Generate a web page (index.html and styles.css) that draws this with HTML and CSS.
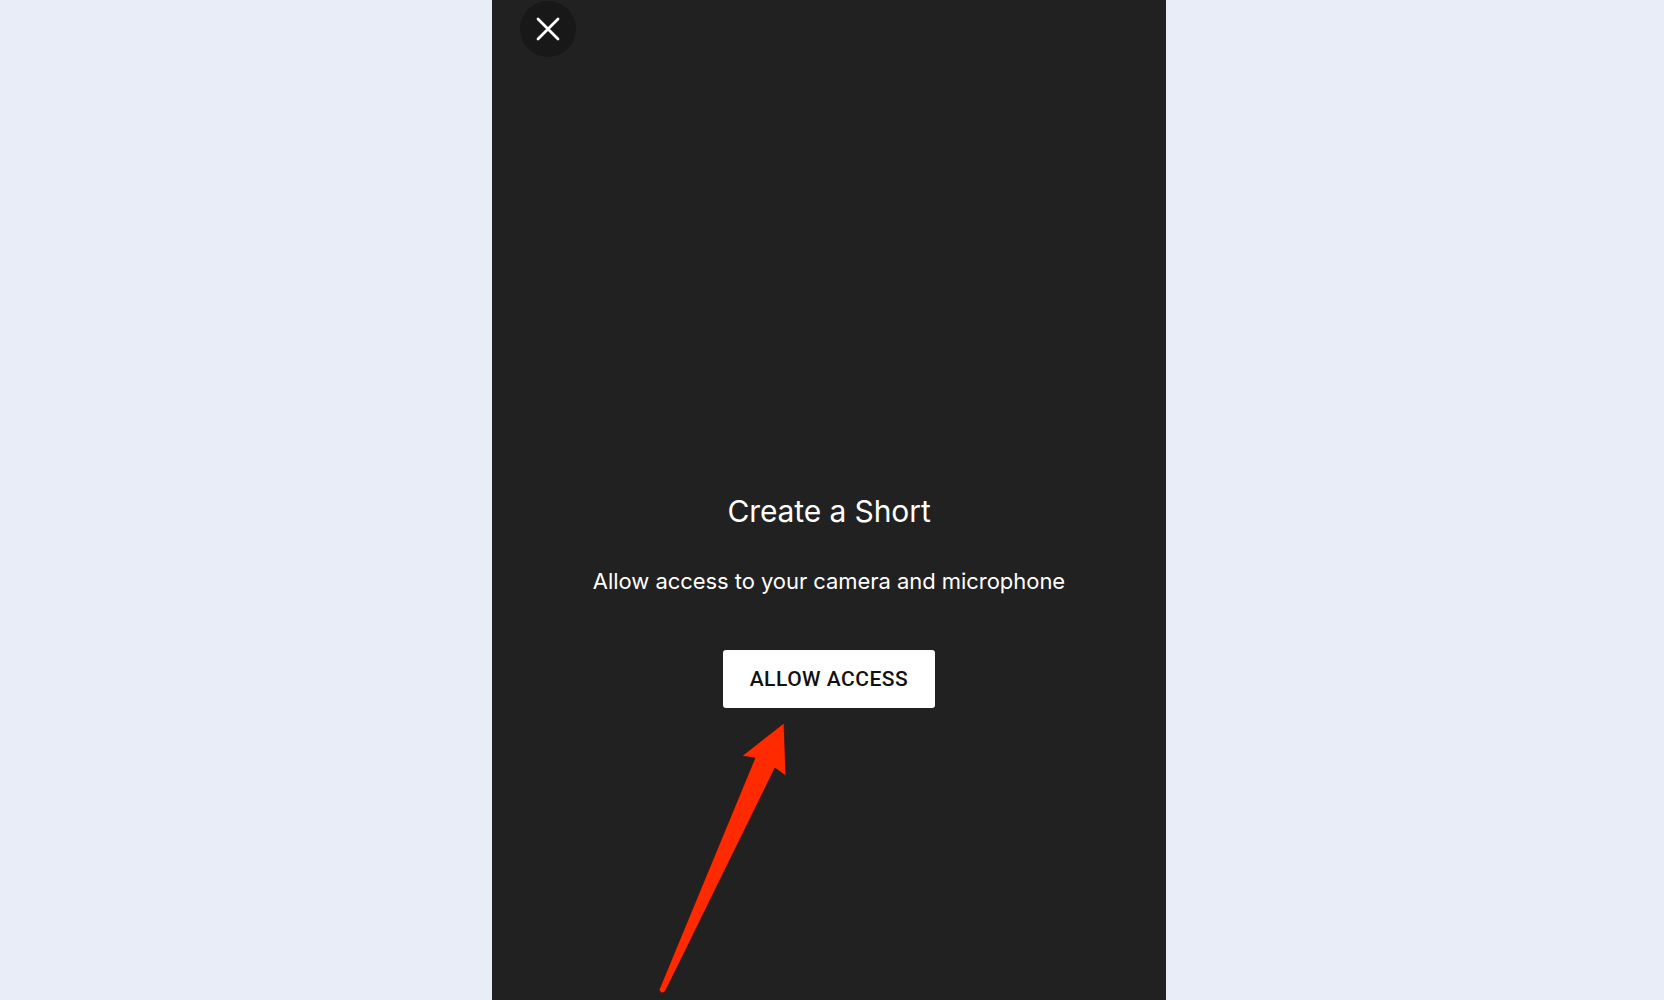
FILE: index.html
```html
<!DOCTYPE html>
<html>
<head>
<meta charset="utf-8">
<link rel="stylesheet" href="styles.css">
</head>
<body>
<div class="page">
  <div class="phone">
    <div class="topbar">
      <button class="close" aria-label="Close">
        <svg width="24" height="24" viewBox="0 0 24 24"><path d="M2 2 L22 22 M22 2 L2 22" stroke="#fff" stroke-width="2.8" stroke-linecap="round" fill="none"/></svg>
      </button>
    </div>
    <div class="content">
      <h1 class="title">Create a Short</h1>
      <p class="sub">Allow access to your camera and microphone</p>
      <button class="allow">ALLOW ACCESS</button>
    </div>
    <svg class="arrow" width="674" height="1000" viewBox="0 0 674 1000">
      <path d="M292 723 L294 776 L283 768 L174 990 Q170 996 167 990 L263 758 L250 756 Z" fill="#ff2a00" stroke="#3a1a12" stroke-width="0.8" stroke-linejoin="round"/>
    </svg>
  </div>
</div>
</body>
</html>
```
FILE: styles.css
```css
html, body { margin: 0; padding: 0; }
body { background: #e9edf8; }
.page { display: flex; justify-content: center; height: 1000px; overflow: hidden; padding-right: 6px; }
.phone { position: relative; width: 674px; height: 1000px; background: #212121; display: flex; flex-direction: column; }
.topbar { padding: 1px 0 0 28px; height: 60px; }
.close { width: 56px; height: 56px; border-radius: 50%; background: #181818; border: none; padding: 0; display: flex; align-items: center; justify-content: center; }
.content { display: flex; flex-direction: column; align-items: center; margin-top: 432px; }
.title { margin: 0; font-family: Inter, "Noto Sans", sans-serif; font-weight: 400; font-size: 30px; line-height: 36px; color: #fff; letter-spacing: -0.1px; }
.sub { margin: 38px 0 0; font-family: Inter, "Noto Sans", sans-serif; font-size: 22px; line-height: 28px; color: #fff; letter-spacing: -0.05px; }
.allow { margin-top: 55px; width: 212px; height: 58px; background: #fff; border: none; border-radius: 3px; font-family: Roboto, "Liberation Sans", sans-serif; font-weight: 500; font-size: 21px; color: #111; letter-spacing: 0.5px; padding: 0; }
.arrow { position: absolute; left: 0; top: 0; pointer-events: none; }
```
